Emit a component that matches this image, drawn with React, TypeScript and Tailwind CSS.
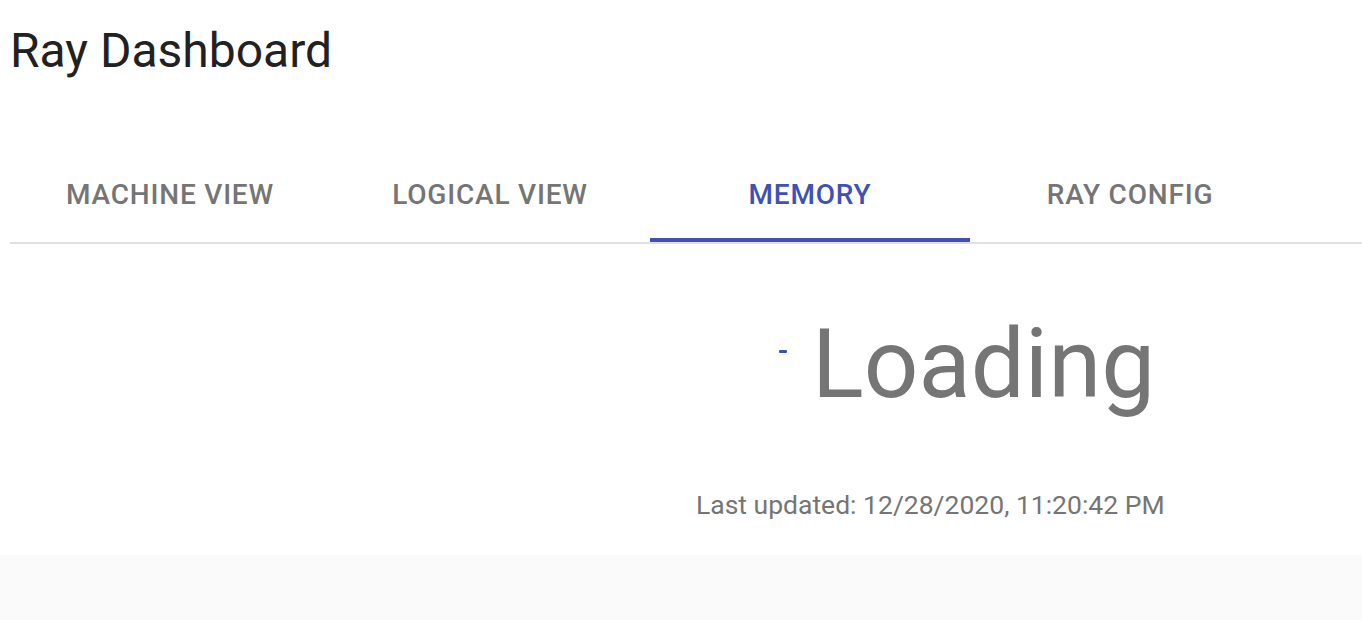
import { useState } from 'react'

const TABS = ['Machine view', 'Logical view', 'Memory', 'Ray config'] as const

export default function App() {
  const [tab, setTab] = useState<number>(2)

  return (
    <div className="min-h-screen bg-[#fafafa] font-['Roboto',sans-serif]">
      <div className="bg-white pl-[10px] pb-[31px]">
        <h1 className="pt-[23px] text-[48px] leading-[56px] font-normal text-[#212121]">Ray Dashboard</h1>

        {/* tabs */}
        <div className="mt-[67px] flex border-b-2 border-[#e0e0e0]">
          {TABS.map((t, i) => (
            <button
              key={t}
              type="button"
              onClick={() => setTab(i)}
              className="flex h-[96px] w-[320px] flex-col"
            >
              <span
                className={`flex flex-1 items-center justify-center pt-[6px] text-[28px] font-medium uppercase tracking-[0.8px] ${
                  tab === i ? 'text-[#3f51b5]' : 'text-[#757575]'
                }`}
              >
                {t}
              </span>
              <span className={`h-[4px] w-full ${tab === i ? 'bg-[#3f51b5]' : 'bg-transparent'}`} />
            </button>
          ))}
        </div>

        {/* loading */}
        <div className="mt-[64px] flex items-start pl-[769px]">
          <span className="mt-[42px] h-[3px] w-[8px] rounded-[1px] bg-[#3f51b5]" />
          <span className="ml-[25px] text-[96px] leading-[112px] font-normal text-[#757575]">Loading</span>
        </div>

        <p className="mt-[65px] pl-[686px] text-[26.5px] leading-[39px] text-[#757575]">
          Last updated: 12/28/2020, 11:20:42 PM
        </p>
      </div>
    </div>
  )
}
